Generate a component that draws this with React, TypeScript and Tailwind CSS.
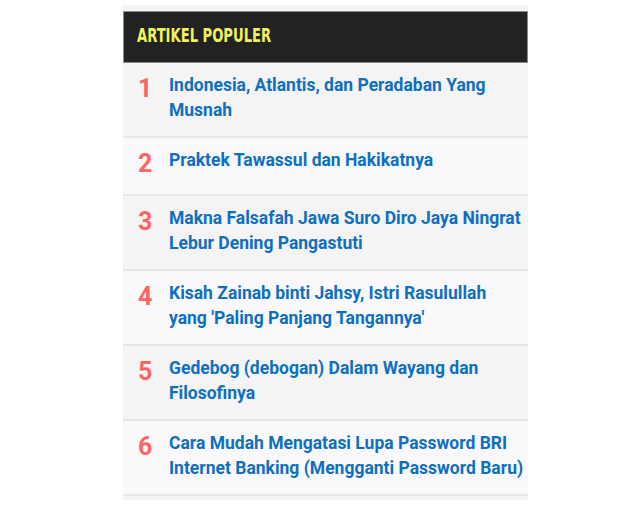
import React from "react";

const posts = [
  "Indonesia, Atlantis, dan Peradaban Yang Musnah",
  "Praktek Tawassul dan Hakikatnya",
  "Makna Falsafah Jawa Suro Diro Jaya Ningrat Lebur Dening Pangastuti",
  "Kisah Zainab binti Jahsy, Istri Rasulullah yang 'Paling Panjang Tangannya'",
  "Gedebog (debogan) Dalam Wayang dan Filosofinya",
  "Cara Mudah Mengatasi Lupa Password BRI Internet Banking (Mengganti Password Baru)",
];

export default function App() {
  return (
    <div className="min-h-[506px] w-[640px] bg-white pl-[123px] pt-[5px]">
      <div className="w-[405px] bg-[#f3f3f3] pt-[6px] pb-[4px]">
        <div className="flex h-[52px] items-center overflow-hidden border border-[#8a8a8a] bg-[#222222] px-[13px] pb-[4px]">
          <h2
            className="origin-left scale-x-[0.73] whitespace-nowrap text-[20px] font-bold uppercase leading-none text-[#f2f25a]"
            style={{ fontFamily: '"DejaVu Sans Condensed", "DejaVu Sans", sans-serif', fontStretch: "condensed" }}
          >
            Artikel Populer
          </h2>
        </div>
        <ul style={{ fontFamily: "Roboto, 'Liberation Sans', sans-serif" }}>
          {posts.map((title, i) => (
            <li
              key={i}
              className={`flex border-b-2 border-[#e6e6e6] pl-[15px] pr-[4px] pt-[10px] pb-[14px] ${
                i % 2 === 0 ? "bg-[#f4f4f4]" : "bg-[#f9f9fb]"
              }`}
            >
              <span className="w-[31px] shrink-0 text-[25px] font-bold leading-[32px] text-[#ff6464]">
                {i + 1}
              </span>
              <a className="text-[17.5px] font-bold leading-[24.5px] text-[#0f6fbf]">
                {title}
              </a>
            </li>
          ))}
        </ul>
      </div>
    </div>
  );
}
